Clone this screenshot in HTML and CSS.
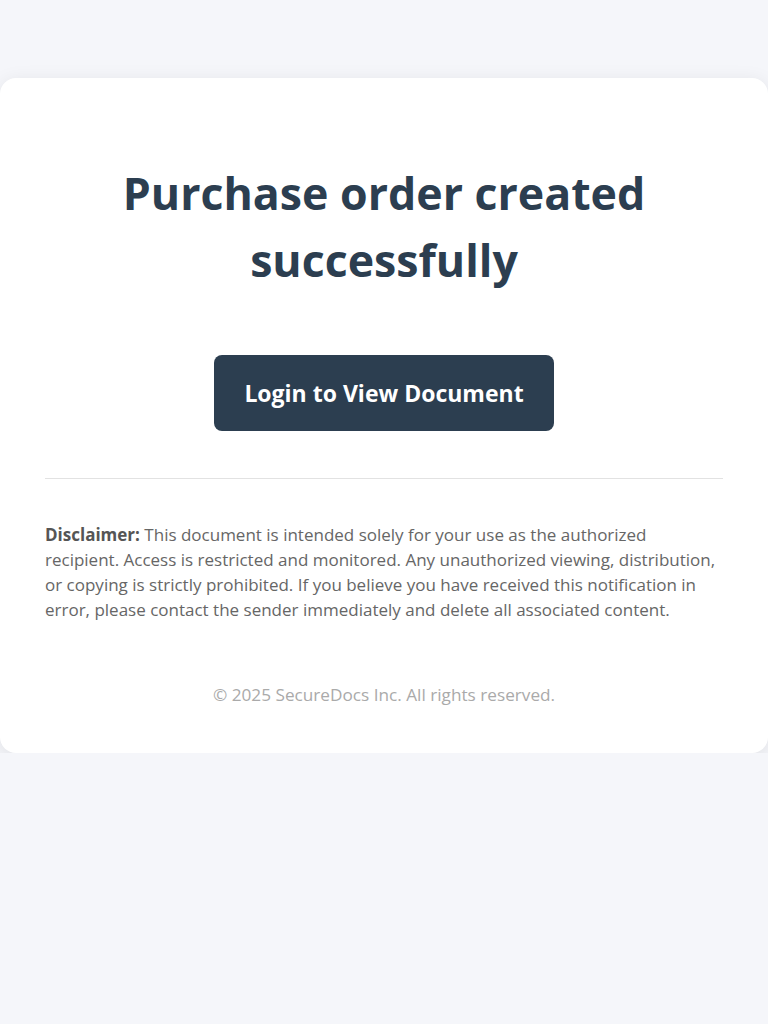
FILE: index.html
```html
<!DOCTYPE html>
<html lang="en">
<head>
<meta charset="utf-8">
<title>Purchase order created successfully</title>
<link rel="stylesheet" href="styles.css">
</head>
<body>
<main class="page">
  <section class="card">
    <h1 class="title">Purchase order created successfully</h1>
    <div class="action">
      <button class="btn" type="button">Login to View Document</button>
    </div>
    <hr class="divider">
    <p class="disclaimer"><strong>Disclaimer:</strong> This document is intended solely for your use as the authorized recipient. Access is restricted and monitored. Any unauthorized viewing, distribution, or copying is strictly prohibited. If you believe you have received this notification in error, please contact the sender immediately and delete all associated content.</p>
    <p class="footer">© 2025 SecureDocs Inc. All rights reserved.</p>
  </section>
</main>
</body>
</html>
```
FILE: styles.css
```css
* { box-sizing: border-box; }
html, body { margin: 0; padding: 0; }
body {
  background: #f5f6fa;
  font-family: "Open Sans", "Noto Sans", sans-serif;
  color: #333;
}
.page {
  padding-top: 78px;
}
.card {
  background: #fff;
  border-radius: 16px;
  box-shadow: 0 4px 20px rgba(0,0,0,0.09);
  padding: 81px 45px 45px;
}
.title {
  margin: 0;
  text-align: center;
  font-size: 44.7px;
  line-height: 67px;
  font-weight: 700;
  color: #2c3e50;
}
.action {
  display: flex;
  justify-content: center;
  margin-top: 62px;
}
.btn {
  font-family: inherit;
  background: #2c3e50;
  color: #fff;
  border: none;
  border-radius: 8px;
  width: 340px;
  height: 76px;
  font-size: 23px;
  font-weight: 700;
  cursor: pointer;
}
.divider {
  border: 0;
  border-top: 1px solid #e2e2e2;
  margin: 47px 0 0;
}
.disclaimer {
  margin: 43px 0 0;
  font-size: 17px;
  line-height: 25px;
  color: #666;
}
.disclaimer strong { color: #555; }
.footer {
  margin: 60px 0 0;
  text-align: center;
  font-size: 17.2px;
  line-height: 26px;
  color: #aaa;
}
```
